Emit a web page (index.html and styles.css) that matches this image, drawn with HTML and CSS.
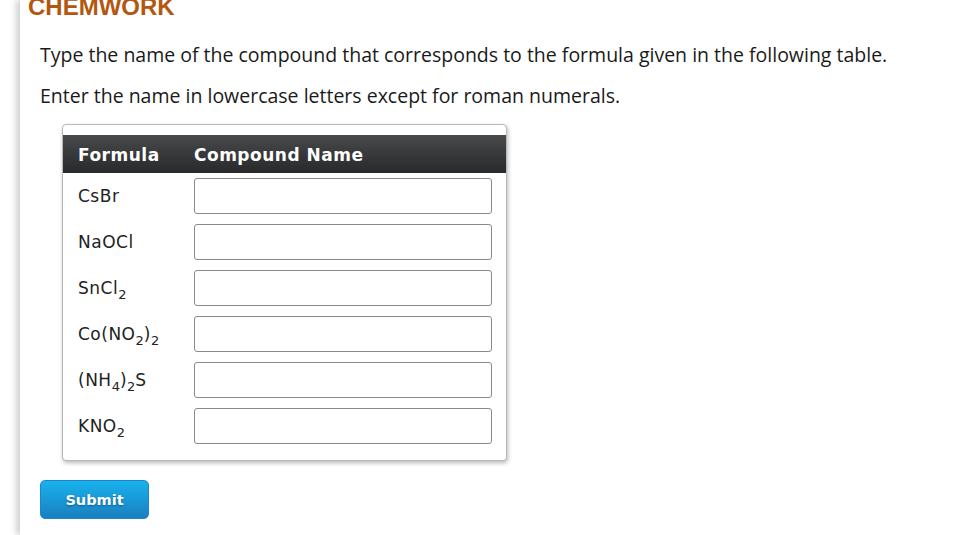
FILE: index.html
```html
<!DOCTYPE html>
<html>
<head>
<meta charset="utf-8">
<link rel="stylesheet" href="styles.css">
</head>
<body>
<div class="panel">
  <h1 class="brand">CHEMWORK</h1>
  <p class="prompt">Type the name of the compound that corresponds to the formula given in the following table.</p>
  <p class="prompt">Enter the name in lowercase letters except for roman numerals.</p>
  <div class="card">
    <table class="grid">
      <thead>
        <tr><th class="c-formula">Formula</th><th class="c-name">Compound Name</th></tr>
      </thead>
      <tbody>
        <tr><td class="c-formula">CsBr</td><td class="c-name"><input class="answer" type="text"></td></tr>
        <tr><td class="c-formula">NaOCl</td><td class="c-name"><input class="answer" type="text"></td></tr>
        <tr><td class="c-formula">SnCl<sub>2</sub></td><td class="c-name"><input class="answer" type="text"></td></tr>
        <tr><td class="c-formula">Co(NO<sub>2</sub>)<sub>2</sub></td><td class="c-name"><input class="answer" type="text"></td></tr>
        <tr><td class="c-formula">(NH<sub>4</sub>)<sub>2</sub>S</td><td class="c-name"><input class="answer" type="text"></td></tr>
        <tr><td class="c-formula">KNO<sub>2</sub></td><td class="c-name"><input class="answer" type="text"></td></tr>
      </tbody>
    </table>
  </div>
  <button class="submit" type="button">Submit</button>
</div>
</body>
</html>
```
FILE: styles.css
```css
html, body {
  margin: 0;
  padding: 0;
  background: #ffffff;
}
body {
  height: 535px;
  overflow: hidden;
}
.panel {
  display: flow-root;
  margin-left: 20px;
  height: 100%;
  background: #ffffff;
  box-shadow: -4px 0 6px rgba(0, 0, 0, 0.18);
  padding-left: 20px;
  box-sizing: border-box;
}
.brand {
  margin: -5px 0 0 -12px;
  font-family: "Liberation Sans", Arial, sans-serif;
  font-weight: bold;
  font-size: 24px;
  line-height: 24px;
  color: #b3570f;
}
.prompt {
  margin: 0;
  font-family: "Open Sans", sans-serif;
  font-size: 19.5px;
  line-height: 41px;
  color: #1a1a1a;
}
.brand + .prompt {
  margin-top: 15px;
}
.card {
  margin-top: 8px;
  margin-left: 22px;
  width: 443px;
  border: 1px solid #b8b8b8;
  border-radius: 4px;
  box-shadow: 1px 2px 4px rgba(0, 0, 0, 0.28);
  padding: 10px 0 11px;
  background: #fff;
}
.grid {
  width: 100%;
  border-collapse: collapse;
  font-family: "DejaVu Sans", Verdana, sans-serif;
  letter-spacing: 0.5px;
}
.grid thead tr {
  background: linear-gradient(#48494b, #28292b);
}
.grid th {
  height: 38px;
  box-sizing: border-box;
  padding: 2px 0 0;
  text-align: left;
  color: #ffffff;
  font-size: 17px;
  font-weight: bold;
}
.grid th.c-formula,
.grid td.c-formula {
  padding-left: 15px;
  width: 116px;
}
.grid td {
  padding: 0;
  height: 46px;
  font-size: 17px;
  color: #222;
}
sub {
  font-size: 13px;
  vertical-align: -5px;
  line-height: 0;
  letter-spacing: 0;
}
.answer {
  display: block;
  width: 298px;
  height: 36px;
  box-sizing: border-box;
  border: 1px solid #8a8a8a;
  border-radius: 3px;
  margin: 0;
  padding: 0 6px;
  background: #fff;
  font-size: 16px;
}
.submit {
  margin-top: 19px;
  display: block;
  width: 109px;
  height: 39px;
  border: 1px solid #1c86c6;
  border-radius: 5px;
  background: linear-gradient(#18b2ee, #1a7fc0);
  color: #ffffff;
  font-family: "DejaVu Sans", Verdana, sans-serif;
  font-weight: bold;
  font-size: 14.5px;
  text-shadow: 0 1px 2px rgba(0, 0, 0, 0.35);
  padding: 0;
}
```
